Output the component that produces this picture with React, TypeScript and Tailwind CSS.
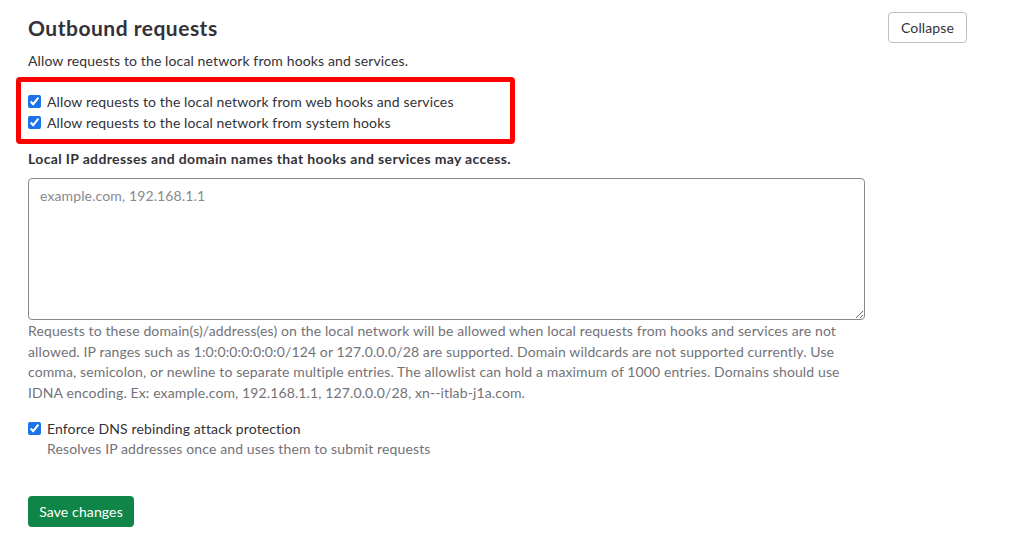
import React from "react";

const font = { fontFamily: "Lato, 'Noto Sans', sans-serif" };

function Check({ label }: { label: string }) {
  return (
    <label className="flex items-center h-[21px] gap-[6px] text-[14px] tracking-[0.12px] text-[#333238]">
      <input type="checkbox" defaultChecked className="w-[13px] h-[13px] m-0 accent-[#1a73e8]" />
      <span>{label}</span>
    </label>
  );
}

export default function App() {
  return (
    <div className="w-[1024px] h-[536px] bg-white overflow-hidden" style={font}>
      <div className="px-[28px] pt-[12px]">
        <div className="flex items-start justify-between pr-[29px]">
          <h2 className="text-[21px] tracking-[0.5px] leading-[32px] font-bold text-[#333238] mt-0">Outbound requests</h2>
          <button className="h-[31px] w-[79px] border border-[#bfbfc3] rounded-[4px] text-[14px] tracking-[0.12px] text-[#333238] bg-white">
            Collapse
          </button>
        </div>
        <p className="text-[14px] tracking-[0.12px] leading-[20px] text-[#333238] mt-[7px]">
          Allow requests to the local network from hooks and services.
        </p>

        <div className="-ml-[12px] mt-[6px] w-[499px] h-[67px] border-[5px] border-[#ff0000] rounded-[4px] px-[7px] pt-[9px]">
          <Check label="Allow requests to the local network from web hooks and services" />
          <Check label="Allow requests to the local network from system hooks" />
        </div>

        <div className="mt-[5px] text-[14px] tracking-[0.35px] leading-[20px] font-bold text-[#333238]">
          Local IP addresses and domain names that hooks and services may access.
        </div>
        <textarea
          placeholder="example.com, 192.168.1.1"
          className="mt-[9px] block w-[837px] h-[142px] border border-[#89888d] rounded-[4px] px-[11px] py-[7px] text-[14px] tracking-[0.12px] leading-[20px] placeholder:text-[#89888d] outline-none"
        />
        <p className="w-[837px] mt-[1px] text-[14px] tracking-[0.12px] leading-[20.5px] text-[#737278]">
          Requests to these domain(s)/address(es) on the local network will be allowed when local requests from hooks and
          services are not allowed. IP ranges such as 1:0:0:0:0:0:0:0/124 or 127.0.0.0/28 are supported. Domain wildcards
          are not supported currently. Use comma, semicolon, or newline to separate multiple entries. The allowlist can
          hold a maximum of 1000 entries. Domains should use IDNA encoding. Ex: example.com, 192.168.1.1, 127.0.0.0/28,
          xn--itlab-j1a.com.
        </p>

        <div className="mt-[15px]">
          <Check label="Enforce DNS rebinding attack protection" />
          <div className="pl-[19px] text-[14px] tracking-[0.12px] leading-[20px] text-[#737278]">
            Resolves IP addresses once and uses them to submit requests
          </div>
        </div>

        <button className="mt-[37px] h-[31px] w-[106px] rounded-[4px] bg-[#108548] text-white text-[14px] tracking-[0.12px]">
          Save changes
        </button>
      </div>
    </div>
  );
}
